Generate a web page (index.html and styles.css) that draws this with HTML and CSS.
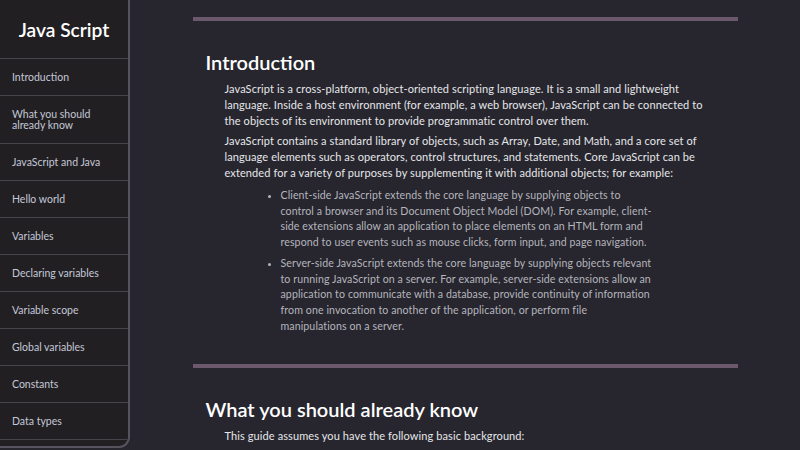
FILE: index.html
```html
<!DOCTYPE html>
<html lang="en">
<head>
<meta charset="utf-8">
<title>Java Script</title>
<link rel="stylesheet" href="styles.css">
</head>
<body>
<div class="layout">
  <nav class="sidebar">
    <header class="brand">Java Script</header>
    <a class="nav-link" href="#introduction">Introduction</a>
    <a class="nav-link" href="#what">What you should already know</a>
    <a class="nav-link" href="#java">JavaScript and Java</a>
    <a class="nav-link" href="#hello">Hello world</a>
    <a class="nav-link" href="#variables">Variables</a>
    <a class="nav-link" href="#declaring">Declaring variables</a>
    <a class="nav-link" href="#scope">Variable scope</a>
    <a class="nav-link" href="#global">Global variables</a>
    <a class="nav-link" href="#constants">Constants</a>
    <a class="nav-link" href="#types">Data types</a>
  </nav>
  <main class="main">
    <section class="section" id="introduction">
      <div class="bar"></div>
      <h2 class="title">Introduction</h2>
      <p class="para">JavaScript is a cross-platform, object-oriented scripting language. It is a small and lightweight language. Inside a host environment (for example, a web browser), JavaScript can be connected to the objects of its environment to provide programmatic control over them.</p>
      <p class="para">JavaScript contains a standard library of objects, such as Array, Date, and Math, and a core set of language elements such as operators, control structures, and statements. Core JavaScript can be extended for a variety of purposes by supplementing it with additional objects; for example:</p>
      <ul class="list">
        <li>Client-side JavaScript extends the core language by supplying objects to control a browser and its Document Object Model (DOM). For example, client-side extensions allow an application to place elements on an HTML form and respond to user events such as mouse clicks, form input, and page navigation.</li>
        <li>Server-side JavaScript extends the core language by supplying objects relevant to running JavaScript on a server. For example, server-side extensions allow an application to communicate with a database, provide continuity of information from one invocation to another of the application, or perform file manipulations on a server.</li>
      </ul>
    </section>
    <section class="section" id="what">
      <div class="bar"></div>
      <h2 class="title">What you should already know</h2>
      <p class="para">This guide assumes you have the following basic background:</p>
    </section>
  </main>
</div>
</body>
</html>
```
FILE: styles.css
```css
html, body {
  margin: 0;
  padding: 0;
  background: #27262e;
  height: 450px;
  overflow: hidden;
  font-family: "Lato", "Noto Sans", sans-serif;
}
.layout {
  display: flex;
  align-items: flex-start;
}
.sidebar {
  flex: 0 0 128px;
  width: 128px;
  height: 446px;
  overflow: hidden;
  background: #221f23;
  border-right: 2px solid #55535d;
  border-bottom: 2px solid #55535d;
  border-bottom-right-radius: 11px;
  display: flex;
  flex-direction: column;
}
.brand {
  height: 58px;
  flex: 0 0 58px;
  display: flex;
  align-items: center;
  justify-content: center;
  color: #ffffff;
  font-size: 19.2px;
  font-weight: 600;
  padding-top: 1px;
  box-sizing: border-box;
}
.nav-link {
  flex: 0 0 auto;
  display: block;
  border-top: 1px solid #47444b;
  padding: 12.5px 10px 12.5px 12px;
  font-size: 10.5px;
  line-height: 11px;
  color: #c3c8d6;
  text-decoration: none;
}
.nav-link:last-child {
  border-bottom: 1px solid #47444b;
}
.main {
  flex: 1;
  padding-top: 17px;
}
.section {
  width: 545px;
  margin: 0 auto;
}
.bar {
  height: 4px;
  background: #6c586c;
}
.title {
  margin: 28px 0 0 0;
  padding-left: 13px;
  color: #ffffff;
  font-size: 20px;
  font-weight: 600;
  line-height: 26px;
}
.para {
  margin: 6px 0 0 0;
  padding: 0 32px;
  color: #e6e6ea;
  font-size: 11px;
  letter-spacing: 0.1px;
  line-height: 16px;
}
.para + .para {
  margin-top: 4px;
}
.list {
  margin: 7px 83px 0 88px;
  padding: 0;
  color: #b5b5bd;
  font-size: 10.6px;
  letter-spacing: 0.1px;
  line-height: 15.7px;
}
.list li {
  margin-bottom: 5px;
}
#what {
  margin-top: 30px;
}
#what .title {
  margin-top: 28px;
}
```
